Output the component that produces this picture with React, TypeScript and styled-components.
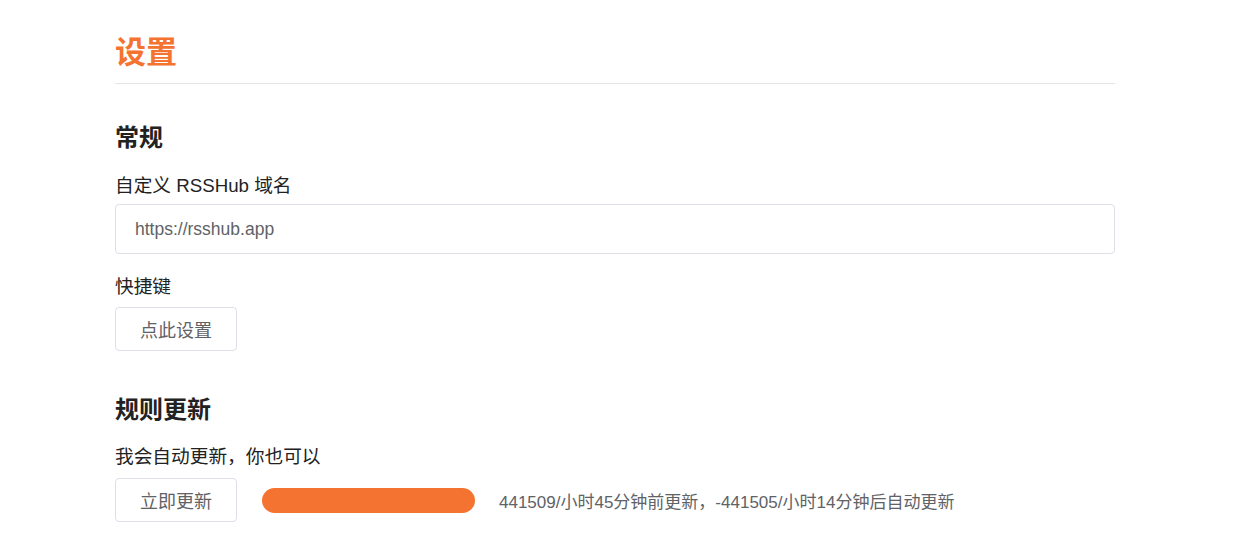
import React from "react";
import styled, { createGlobalStyle } from "styled-components";

const GlobalStyle = createGlobalStyle`
  body {
    margin: 0;
    background: #fff;
    font-family: "Liberation Sans", "Noto Sans CJK SC", sans-serif;
    color: #222;
  }
`;

const Page = styled.div`
  width: 1000px;
  margin-left: 115px;
  padding-top: 33px;
`;

const Title = styled.h1`
  margin: 0;
  font-size: 31px;
  line-height: 40px;
  font-weight: 700;
  color: #f57331;
  padding-bottom: 10px;
  border-bottom: 1px solid #e5e5e5;
`;

const Section = styled.section<{ gap: number }>`
  margin-top: ${(p) => p.gap}px;
`;

const Heading = styled.h2`
  margin: 0;
  font-size: 24px;
  line-height: 32px;
  font-weight: 700;
  color: #222;
`;

const Label = styled.div<{ top: number }>`
  margin-top: ${(p) => p.top}px;
  font-size: 18.7px;
  line-height: 26px;
  color: #222;
`;

const Input = styled.input`
  display: block;
  box-sizing: border-box;
  width: 100%;
  height: 50px;
  margin-top: 5px;
  padding: 0 19px;
  border: 1px solid #dcdfe6;
  border-radius: 4px;
  font-family: inherit;
  font-size: 17.5px;
  color: #606266;
  outline: none;
  &::placeholder {
    color: #606266;
  }
`;

const Button = styled.button`
  box-sizing: border-box;
  width: 122px;
  height: 44px;
  border: 1px solid #dcdfe6;
  border-radius: 4px;
  background: #fff;
  font-family: inherit;
  font-size: 18px;
  color: #606266;
  cursor: pointer;
  padding: 0;
`;

const ButtonWrap = styled.div<{ top: number }>`
  margin-top: ${(p) => p.top}px;
`;

const UpdateRow = styled.div`
  display: flex;
  align-items: center;
  margin-top: 8px;
`;

const Bar = styled.div`
  width: 213px;
  height: 25px;
  margin-left: 25px;
  border-radius: 13px;
  background: #f57331;
`;

const Status = styled.span`
  margin-left: 24px;
  font-size: 17px;
  color: #606266;
`;

export default function App() {
  return (
    <>
      <GlobalStyle />
      <Page>
        <Title>设置</Title>

        <Section gap={38}>
          <Heading>常规</Heading>
          <Label top={19}>自定义 RSSHub 域名</Label>
          <Input placeholder="https://rsshub.app" />
          <Label top={20}>快捷键</Label>
          <ButtonWrap top={7}>
            <Button>点此设置</Button>
          </ButtonWrap>
        </Section>

        <Section gap={43}>
          <Heading>规则更新</Heading>
          <Label top={18}>我会自动更新，你也可以</Label>
          <UpdateRow>
            <Button>立即更新</Button>
            <Bar />
            <Status>441509/小时45分钟前更新，-441505/小时14分钟后自动更新</Status>
          </UpdateRow>
        </Section>
      </Page>
    </>
  );
}
